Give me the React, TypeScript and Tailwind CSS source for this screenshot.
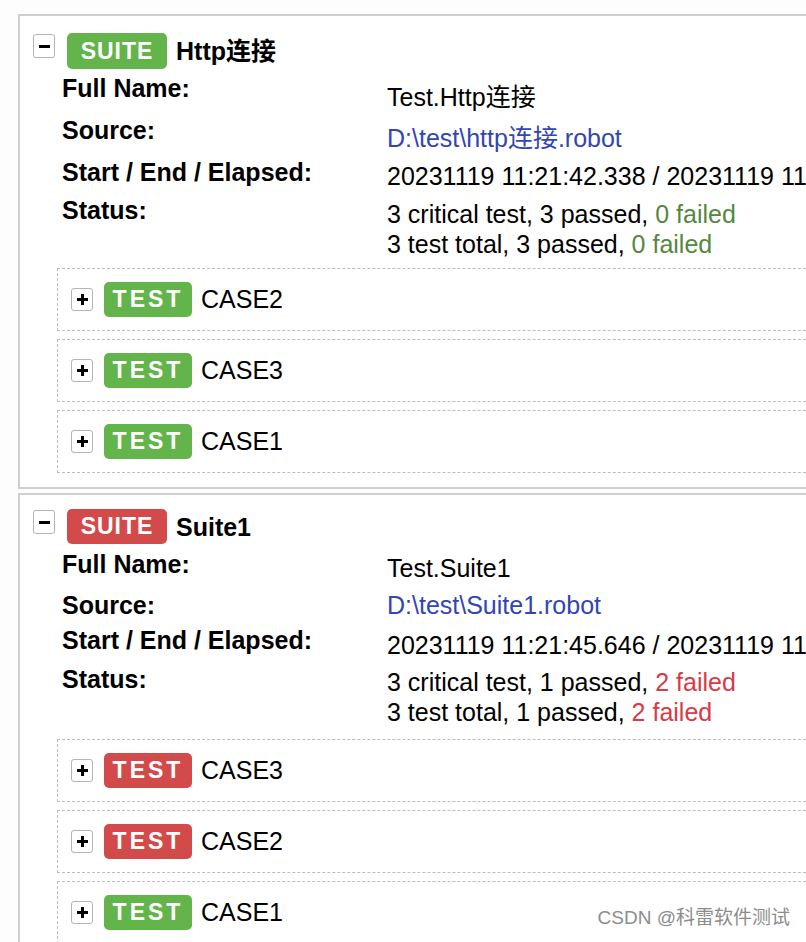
const font = { fontFamily: '"Liberation Sans", Arial, "Noto Sans CJK SC", sans-serif' };

type Row = { label: string; value: React.ReactNode; rowCls: string; valCls: string };

type Suite = {
  name: string;
  pass: boolean;
  boxCls: string;
  headerCls: string;
  badgeCls: string;
  rowsCls: string;
  statusCls: string;
  testsCls: string;
  rows: Row[];
  status: React.ReactNode[];
  tests: { name: string; pass: boolean }[];
};

function Minus() {
  return (
    <div className="mt-[1px] w-[22px] h-[24px] border border-[#b5b5b5] rounded-[3px] bg-white flex items-center justify-center shrink-0">
      <div className="w-[11px] h-[3px] bg-black" />
    </div>
  );
}

function Plus() {
  return (
    <div className="relative w-[22px] h-[23px] border border-[#b5b5b5] rounded-[3px] bg-white flex items-center justify-center shrink-0">
      <div className="w-[11px] h-[3px] bg-black" />
      <div className="absolute w-[3px] h-[11px] bg-black" />
    </div>
  );
}

function Green({ children }: { children: React.ReactNode }) {
  return <span className="text-[#55883f]">{children}</span>;
}

function Red({ children }: { children: React.ReactNode }) {
  return <span className="text-[#d93a46]">{children}</span>;
}

function SuiteBox({ s }: { s: Suite }) {
  return (
    <div className={`ml-[18px] w-[860px] border-2 border-[#cfcfcf] bg-white pl-[13px] ${s.boxCls}`}>
      <div className={`flex items-start ${s.headerCls}`}>
        <Minus />
        <div
          className={`ml-[12px] w-[100px] rounded-[5px] flex items-center justify-center text-white font-bold text-[23px] tracking-[1px] ${s.badgeCls} ${
            s.pass ? 'bg-[#62b44b]' : 'bg-[#d24b4a]'
          }`}
        >
          SUITE
        </div>
        <div className="ml-[9px] font-bold text-[25px] leading-[36px] text-black">{s.name}</div>
      </div>

      <div className={`pl-[29px] ${s.rowsCls}`}>
        {s.rows.map((r) => (
          <div key={r.label} className={`flex items-start ${r.rowCls}`}>
            <div className="w-[325px] shrink-0 whitespace-nowrap font-bold text-[25px] leading-[28px] text-black">
              {r.label}
            </div>
            <div className={`text-[25px] leading-[28px] text-black whitespace-nowrap ${r.valCls}`}>{r.value}</div>
          </div>
        ))}
        <div className="flex items-start">
          <div className="w-[325px] shrink-0 whitespace-nowrap font-bold text-[25px] leading-[28px] text-black">
            Status:
          </div>
          <div className={`text-[25px] leading-[30px] text-black whitespace-nowrap ${s.statusCls}`}>
            {s.status.map((l, i) => (
              <div key={i}>{l}</div>
            ))}
          </div>
        </div>
      </div>

      <div className={`ml-[24px] flex flex-col gap-[8px] ${s.testsCls}`}>
        {s.tests.map((t) => (
          <div
            key={t.name}
            className="h-[63px] border border-dashed border-[#bdbdbd] flex items-center pl-[13px]"
          >
            <Plus />
            <div
              className={`ml-[11px] w-[88px] h-[35px] rounded-[5px] flex items-center justify-center text-white font-bold text-[23px] tracking-[3px] ${
                t.pass ? 'bg-[#62b44b]' : 'bg-[#d24b4a]'
              }`}
            >
              TEST
            </div>
            <div className="ml-[9px] text-[25px] text-black">{t.name}</div>
          </div>
        ))}
      </div>
    </div>
  );
}

const suites: Suite[] = [
  {
    name: 'Http连接',
    pass: true,
    boxCls: 'mt-[14px] pb-[14px]',
    headerCls: 'mt-[17px]',
    badgeCls: 'h-[36px]',
    rowsCls: 'mt-[5px]',
    statusCls: 'mt-[3px]',
    testsCls: 'mt-[9px]',
    rows: [
      { label: 'Full Name:', value: 'Test.Http连接', rowCls: 'h-[42px]', valCls: 'mt-[9px]' },
      {
        label: 'Source:',
        value: <span className="text-[#3245b5]">D:\test\http连接.robot</span>,
        rowCls: 'h-[42px]',
        valCls: 'mt-[8px]',
      },
      {
        label: 'Start / End / Elapsed:',
        value: '20231119 11:21:42.338 / 20231119 11:21:45.640 / 00:00:03.302',
        rowCls: 'h-[38px]',
        valCls: 'mt-[4px]',
      },
    ],
    status: [
      <>3 critical test, 3 passed, <Green>0 failed</Green></>,
      <>3 test total, 3 passed, <Green>0 failed</Green></>,
    ],
    tests: [
      { name: 'CASE2', pass: true },
      { name: 'CASE3', pass: true },
      { name: 'CASE1', pass: true },
    ],
  },
  {
    name: 'Suite1',
    pass: false,
    boxCls: 'mt-[4px] pb-[14px]',
    headerCls: 'mt-[14px]',
    badgeCls: 'h-[35px]',
    rowsCls: 'mt-[5px]',
    statusCls: 'mt-[2px]',
    testsCls: 'mt-[12px]',
    rows: [
      { label: 'Full Name:', value: 'Test.Suite1', rowCls: 'h-[41px]', valCls: 'mt-[4px]' },
      {
        label: 'Source:',
        value: <span className="text-[#3245b5]">D:\test\Suite1.robot</span>,
        rowCls: 'h-[35px]',
        valCls: 'mt-[0px]',
      },
      {
        label: 'Start / End / Elapsed:',
        value: '20231119 11:21:45.646 / 20231119 11:21:48.712 / 00:00:03.066',
        rowCls: 'h-[39px]',
        valCls: 'mt-[5px]',
      },
    ],
    status: [
      <>3 critical test, 1 passed, <Red>2 failed</Red></>,
      <>3 test total, 1 passed, <Red>2 failed</Red></>,
    ],
    tests: [
      { name: 'CASE3', pass: false },
      { name: 'CASE2', pass: false },
      { name: 'CASE1', pass: true },
    ],
  },
];

export default function App() {
  return (
    <div className="relative w-[806px] h-[942px] overflow-hidden bg-[#fdfdfd]" style={font}>
      <div className="pt-0">
        {suites.map((s) => (
          <SuiteBox key={s.name} s={s} />
        ))}
      </div>
      <div className="absolute right-[16px] bottom-[10px] text-[19px] text-[#8c8c8c]">CSDN @科雷软件测试</div>
    </div>
  );
}
